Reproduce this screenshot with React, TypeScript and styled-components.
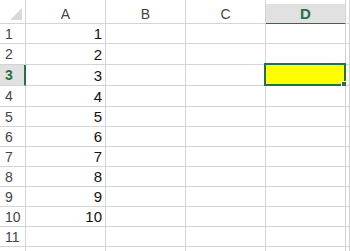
import React from "react";
import styled, { createGlobalStyle } from "styled-components";

const GlobalStyle = createGlobalStyle`
  html, body {
    margin: 0;
    padding: 0;
    background: #ffffff;
    overflow: hidden;
  }
`;

const GRID = "#d4d4d4";
const GREEN = "#217346";

const columns = ["A", "B", "C", "D", "E"];
// last row is only a sliver at the bottom edge, no label shown
const rowHeights = [20, 21, 21, 21, 20, 20, 20, 20, 20, 20, 20, 20];
const labelledRows = 11;
const selectedCol = "D";
const selectedRow = 3;

const Sheet = styled.div`
  display: grid;
  grid-template-columns: 26px repeat(4, 80px) 1fr;
  grid-template-rows: 24px ${rowHeights.map((h) => `${h}px`).join(" ")};
  width: 350px;
  height: 251px;
  overflow: hidden;
  font-family: "Liberation Sans", Arial, sans-serif;
`;

const Corner = styled.div`
  position: relative;
  border-right: 1px solid ${GRID};
  border-bottom: 1px solid ${GRID};
  &::after {
    content: "";
    position: absolute;
    right: 3px;
    bottom: 3px;
    width: 0;
    height: 0;
    border-left: 12px solid transparent;
    border-bottom: 12px solid #d9d9d9;
  }
`;

const ColHeader = styled.div<{ $active?: boolean }>`
  display: flex;
  align-items: center;
  justify-content: center;
  padding-top: 4px;
  box-sizing: border-box;
  border-right: 1px solid ${GRID};
  border-bottom: ${(p) => (p.$active ? `2px solid ${GREEN}` : `1px solid ${GRID}`)};
  margin-bottom: ${(p) => (p.$active ? "-1px" : "0")};
  background: ${(p) =>
    p.$active ? "linear-gradient(#ffffff 0 4px, #e1e1e1 4px)" : "#ffffff"};
  color: ${(p) => (p.$active ? GREEN : "#444444")};
  font-size: ${(p) => (p.$active ? "15px" : "14px")};
  font-weight: ${(p) => (p.$active ? "bold" : "normal")};
`;

const RowHeader = styled.div<{ $active?: boolean }>`
  display: flex;
  align-items: center;
  padding-left: 5px;
  box-sizing: border-box;
  border-bottom: 1px solid ${GRID};
  border-right: ${(p) => (p.$active ? `2px solid ${GREEN}` : `1px solid ${GRID}`)};
  background: ${(p) => (p.$active ? "#e1e1e1" : "#ffffff")};
  color: ${(p) => (p.$active ? GREEN : "#444444")};
  font-size: 14px;
  font-weight: ${(p) => (p.$active ? "bold" : "normal")};
`;

const Cell = styled.div<{ $selected?: boolean }>`
  position: relative;
  display: flex;
  align-items: center;
  justify-content: flex-end;
  padding-right: 3px;
  box-sizing: border-box;
  border-right: 1px solid ${GRID};
  border-bottom: 1px solid ${GRID};
  color: #111111;
  font-size: 15px;
  background: ${(p) => (p.$selected ? "#ffff00" : "#ffffff")};
`;

const Selection = styled.div`
  position: absolute;
  left: -2px;
  top: -2px;
  right: -1px;
  bottom: -1px;
  border: 2px solid ${GREEN};
`;

const FillHandle = styled.div`
  position: absolute;
  right: -4px;
  bottom: -4px;
  width: 5px;
  height: 5px;
  background: ${GREEN};
  border: 1px solid #ffffff;
`;

export default function App() {
  return (
    <>
      <GlobalStyle />
      <Sheet>
        <Corner />
        {columns.map((c) => (
          <ColHeader key={c} $active={c === selectedCol}>
            {c === "E" ? "" : c}
          </ColHeader>
        ))}
        {rowHeights.map((_, i) => {
          const row = i + 1;
          return (
            <React.Fragment key={row}>
              <RowHeader $active={row === selectedRow}>
                {row <= labelledRows ? row : ""}
              </RowHeader>
              {columns.map((c) => {
                const selected = c === selectedCol && row === selectedRow;
                return (
                  <Cell key={c} $selected={selected}>
                    {c === "A" && row <= 10 ? row : ""}
                    {selected && (
                      <Selection>
                        <FillHandle />
                      </Selection>
                    )}
                  </Cell>
                );
              })}
            </React.Fragment>
          );
        })}
      </Sheet>
    </>
  );
}
